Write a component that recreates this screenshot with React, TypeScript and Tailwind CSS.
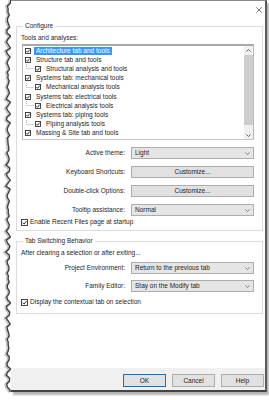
import React from "react";

function Check({ size = 6 }: { size?: number }) {
  const s = size;
  return (
    <svg width={s} height={s} viewBox={`0 0 ${s} ${s}`} className="shrink-0 block">
      <rect x={0.5} y={0.5} width={s - 1} height={s - 1} fill="#fff" stroke="#333" strokeWidth={0.9} />
      <polyline
        points={s === 6 ? "1.4,3 2.6,4.3 4.7,1.6" : "1.5,3.6 3,5.1 5.6,1.9"}
        fill="none"
        stroke="#222"
        strokeWidth={0.9}
      />
    </svg>
  );
}

function Tree() {
  return (
    <svg width={10} height={9} viewBox="0 0 10 9" className="shrink-0 block">
      <line x1={1.5} y1={0} x2={1.5} y2={4.5} stroke="#9a9a9a" strokeWidth={0.8} strokeDasharray="1 1" />
      <line x1={1.5} y1={4.5} x2={9.5} y2={4.5} stroke="#9a9a9a" strokeWidth={0.8} strokeDasharray="1 1" />
    </svg>
  );
}

function Chevron() {
  return (
    <svg width={5} height={3} viewBox="0 0 5 3" className="block">
      <polyline points="0.4,0.4 2.5,2.5 4.6,0.4" fill="none" stroke="#666" strokeWidth={0.8} />
    </svg>
  );
}

const rows: { label: string; child?: boolean; selected?: boolean }[] = [
  { label: "Architecture tab and tools", selected: true },
  { label: "Structure tab and tools" },
  { label: "Structural analysis and tools", child: true },
  { label: "Systems tab: mechanical tools" },
  { label: "Mechanical analysis tools", child: true },
  { label: "Systems tab: electrical tools" },
  { label: "Electrical analysis tools", child: true },
  { label: "Systems tab: piping tools" },
  { label: "Piping analysis tools", child: true },
  { label: "Massing & Site tab and tools" },
];

function Dropdown({ value }: { value: string }) {
  return (
    <div className="w-[123px] h-[12px] shrink-0 bg-[#e5e5e5] border border-[#adadad] flex items-center justify-between pl-[3px] pr-[3px]">
      <span className="leading-[8px]">{value}</span>
      <Chevron />
    </div>
  );
}

function Btn({ label }: { label: string }) {
  return (
    <div className="w-[123px] h-[12px] shrink-0 bg-[#e1e1e1] border border-[#adadad] flex items-center justify-center">
      <span className="leading-[8px]">{label}</span>
    </div>
  );
}

function LabeledRow({ label, children, className = "" }: { label: string; children: React.ReactNode; className?: string }) {
  return (
    <div className={`flex items-center justify-end gap-[6px] ${className}`}>
      <span className="leading-[8px]">{label}</span>
      {children}
    </div>
  );
}

function TornEdge() {
  const pts: string[] = [];
  for (let i = 0; i <= 131; i++) {
    const y = i * 3;
    let x = 8.2 + 1.4 * Math.sin(i * 1.7) + 0.9 * Math.sin(i * 4.3 + 1) + 0.5 * Math.sin(i * 9.1);
    if (y < 4) x = 10.5;
    if (y > 389) x = 10;
    pts.push(`${x.toFixed(2)},${Math.min(y, 392)}`);
  }
  const d = pts.join(" ");
  return (
    <svg width={11} height={396} viewBox="0 0 11 396" className="shrink-0 block">
      <polyline points={d} fill="none" stroke="#a8a8a8" strokeWidth={3} opacity={0.7} transform="translate(-0.8,0.5)" />
      <polyline points={d} fill="none" stroke="#3a3a3a" strokeWidth={1.2} />
    </svg>
  );
}

export default function App() {
  return (
    <div className="w-[269px] h-[400px] bg-white flex font-['Liberation_Sans',Arial,sans-serif] text-[6.5px] text-[#1e1e1e] overflow-hidden">
      <TornEdge />
      <div className="w-[256px] h-[392px] shrink-0 flex flex-col bg-white border-t border-t-[#8a8a8a] border-r-2 border-r-[#5a5a5a] border-b-2 border-b-[#444] shadow-[2px_3px_2px_rgba(0,0,0,0.3)]">
        {/* title bar */}
        <div className="h-[20px] flex justify-end items-start pt-[6px] pr-[3px]">
          <svg width={6} height={6} viewBox="0 0 6 6" className="block">
            <line x1={0.3} y1={0.3} x2={5.7} y2={5.7} stroke="#555" strokeWidth={0.8} />
            <line x1={5.7} y1={0.3} x2={0.3} y2={5.7} stroke="#555" strokeWidth={0.8} />
          </svg>
        </div>

        <div className="pl-[5px] pr-[2px]">
          {/* Configure group */}
          <fieldset className="mt-[1px] border border-[#dcdcdc] pl-[4px] pr-[8px] pb-[4px]">
            <legend className="ml-[2px] px-[2px] h-[8px] leading-[8px]">Configure</legend>
            <div className="pt-[4px] leading-[8px] h-[12px]">Tools and analyses:</div>
            <div className="mt-[2px] ml-[1px] h-[96px] border-t-2 border-t-[#a9a9a9] border-x border-x-[#b8b8b8] border-b border-b-[#c8c8c8] flex overflow-hidden">
              <div className="flex-1 pl-[2px]">
                {rows.map((r) => (
                  <div key={r.label} className="h-[9.2px] flex items-center">
                    {r.child && <Tree />}
                    <Check />
                    <span
                      className={`ml-[3px] px-[2px] h-[8px] leading-[8px] whitespace-nowrap ${
                        r.selected ? "bg-[#3399ff] text-white" : ""
                      }`}
                    >
                      {r.label}
                    </span>
                  </div>
                ))}
              </div>
              <div className="w-[9px] flex flex-col bg-[#f0f0f0]">
                <div className="h-[9px] flex items-center justify-center">
                  <svg width={5} height={3} viewBox="0 0 5 3" className="block">
                    <polyline points="0.4,2.6 2.5,0.5 4.6,2.6" fill="none" stroke="#555" strokeWidth={0.9} />
                  </svg>
                </div>
                <div className="h-[70px] bg-[#cdcdcd]" />
                <div className="flex-1" />
                <div className="h-[8px] flex items-center justify-center">
                  <svg width={5} height={3} viewBox="0 0 5 3" className="block">
                    <polyline points="0.4,0.4 2.5,2.5 4.6,0.4" fill="none" stroke="#555" strokeWidth={0.9} />
                  </svg>
                </div>
              </div>
            </div>

            <LabeledRow label="Active theme:" className="mt-[7px]">
              <Dropdown value="Light" />
            </LabeledRow>
            <LabeledRow label="Keyboard Shortcuts:" className="mt-[7px]">
              <Btn label="Customize..." />
            </LabeledRow>
            <LabeledRow label="Double-click Options:" className="mt-[7px]">
              <Btn label="Customize..." />
            </LabeledRow>
            <LabeledRow label="Tooltip assistance:" className="mt-[7px]">
              <Dropdown value="Normal" />
            </LabeledRow>
            <div className="mt-[2px] h-[8px] flex items-center gap-[2px]">
              <Check size={7} />
              <span className="leading-[8px] whitespace-nowrap">Enable Recent Files page at startup</span>
            </div>
          </fieldset>

          {/* Tab switching group */}
          <fieldset className="mt-[6px] border border-[#dcdcdc] pl-[4px] pr-[8px] pb-[7px]">
            <legend className="ml-[2px] px-[2px] h-[8px] leading-[8px]">Tab Switching Behavior</legend>
            <div className="pt-[4px] leading-[8px] h-[12px]">After clearing a selection or after exiting...</div>
            <LabeledRow label="Project Environment:" className="mt-[5px]">
              <Dropdown value="Return to the previous tab" />
            </LabeledRow>
            <LabeledRow label="Family Editor:" className="mt-[6px]">
              <Dropdown value="Stay on the Modify tab" />
            </LabeledRow>
            <div className="mt-[6px] h-[8px] flex items-center gap-[2px]">
              <Check size={7} />
              <span className="leading-[8px] whitespace-nowrap">Display the contextual tab on selection</span>
            </div>
          </fieldset>
        </div>

        <div className="flex-1" />

        {/* button bar */}
        <div className="h-[22px] bg-[#f0f0f0] flex justify-end items-start pt-[6px] pr-[1px] gap-[6px]">
          <div className="w-[43px] h-[13px] bg-[#e1e1e1] border border-[#0078d7] flex items-center justify-center leading-[8px]">OK</div>
          <div className="w-[43px] h-[13px] bg-[#e1e1e1] border border-[#adadad] flex items-center justify-center leading-[8px]">Cancel</div>
          <div className="w-[43px] h-[13px] bg-[#e1e1e1] border border-[#adadad] flex items-center justify-center leading-[8px]">Help</div>
        </div>
      </div>
    </div>
  );
}
